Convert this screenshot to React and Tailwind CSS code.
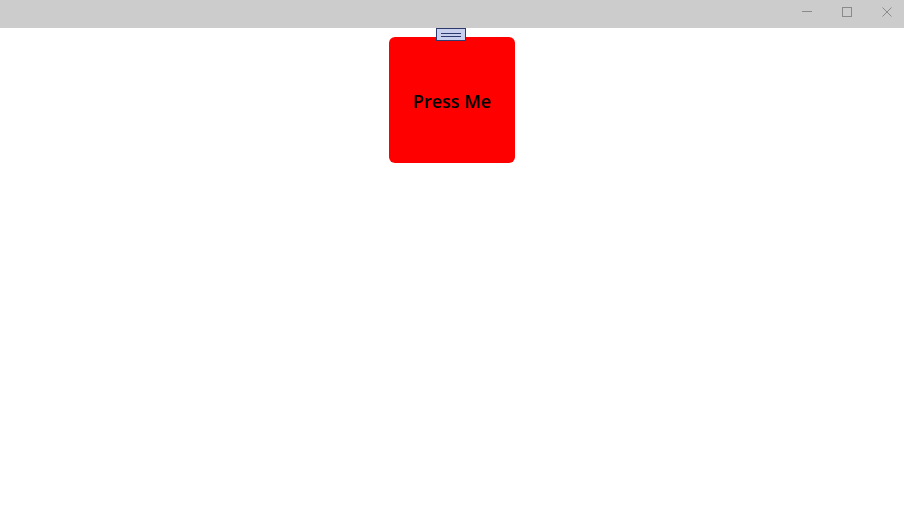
import React from "react";

const App = () => {
  return (
    <div className="w-[904px] h-[530px] bg-white flex flex-col" style={{ fontFamily: '"Open Sans", "Noto Sans", sans-serif' }}>
      <div className="h-[28px] bg-[#cccccc] flex justify-end items-start pt-[7px] pr-[12px] gap-[30px] shrink-0">
        <div className="w-[10px] h-[10px] flex items-start pt-[4px]">
          <div className="w-[10px] h-px bg-[#8a8a8a]"></div>
        </div>
        <div className="w-[10px] h-[10px] border border-[#8a8a8a]"></div>
        <svg width="10" height="10" viewBox="0 0 10 10">
          <path d="M0.5 0.5 L9.5 9.5 M9.5 0.5 L0.5 9.5" stroke="#8a8a8a" strokeWidth="1" />
        </svg>
      </div>
      <div className="flex justify-center">
        <div className="relative mt-[9px]">
          <button className="w-[126px] h-[126px] bg-[#ff0000] rounded-[6px] text-black text-[18px] font-semibold flex items-center justify-center pt-[2px]">
            Press Me
          </button>
          <div className="absolute left-[47px] -top-[9px] w-[30px] h-[13px] bg-[#c8d0ee] border border-[#2c3a6e] flex flex-col items-center justify-center gap-[2px]">
            <div className="w-[20px] h-px bg-[#2c3a6e]"></div>
            <div className="w-[20px] h-px bg-[#2c3a6e]"></div>
          </div>
        </div>
      </div>
    </div>
  );
};

export default App;
